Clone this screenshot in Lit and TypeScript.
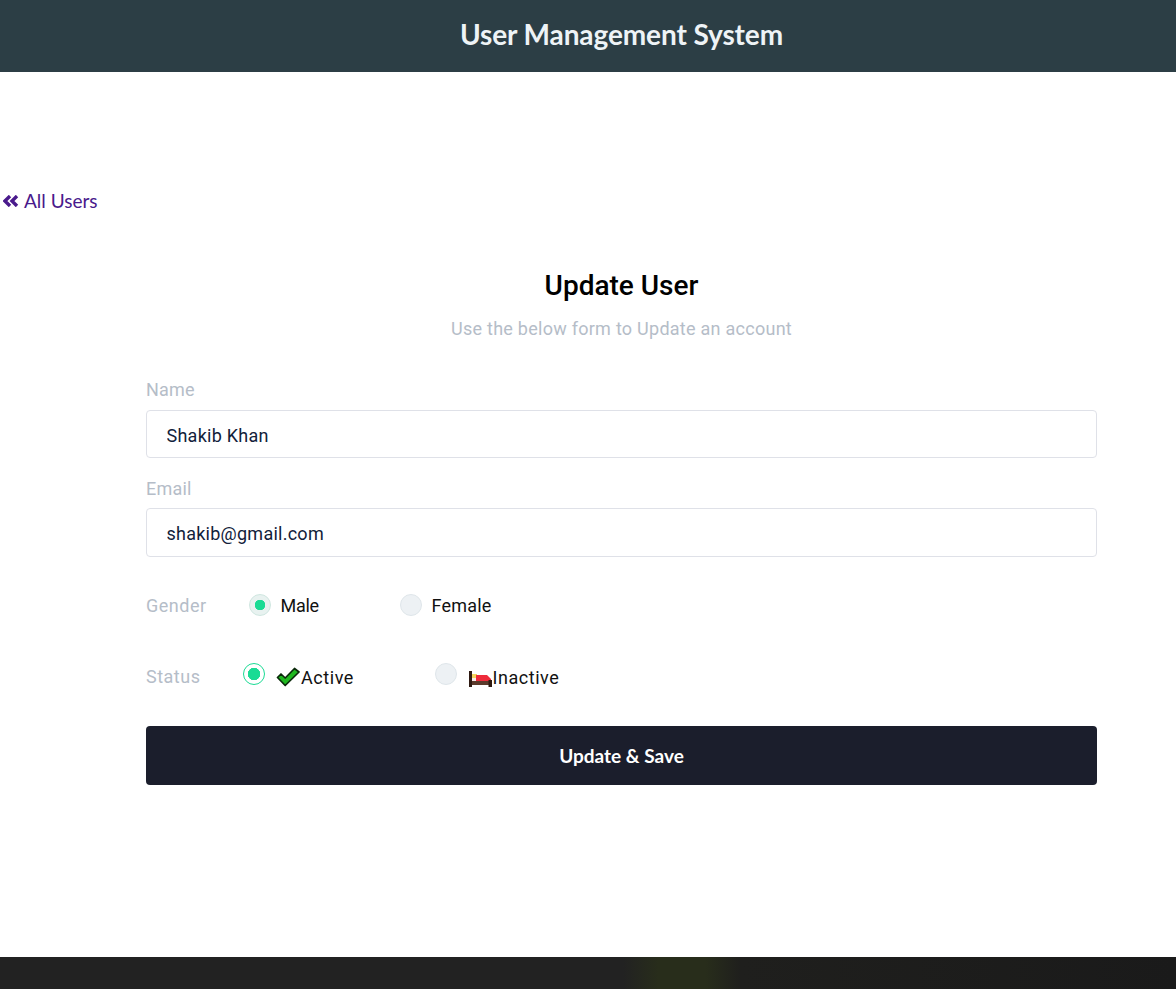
import { LitElement, html, css } from "lit";
import { customElement } from "lit/decorators.js";

@customElement("app-root")
export class AppRoot extends LitElement {
  static styles = css`
    :host { display: flex; flex-direction: column; min-height: 989px; background: #fff; font-family: Roboto, "Liberation Sans", sans-serif; font-size: 18px; color: #111; }
    * { box-sizing: border-box; }
    header { height: 72px; background: #2c3e45; display: flex; align-items: center; justify-content: center; padding: 0 0 4px 67px; }
    header h1 { margin: 0; font: 700 28px/1 Lato, "Open Sans", sans-serif; color: #eef3f6; letter-spacing: -0.1px; }
    main { flex: 1; display: flex; flex-direction: column; }
    .back { display: flex; align-items: center; gap: 5px; margin: 118px 0 0 3px; height: 22px; color: #4a1a8c; font: 400 19px/22px Lato, sans-serif; letter-spacing: 0; text-decoration: none; width: fit-content; }
    .back svg { width: 16px; height: 12px; }
    .wrap { margin: 0 79px 0 146px; display: flex; flex-direction: column; }
    h2 { margin: 55px 0 0; text-align: center; font: 500 28px/38px Roboto, sans-serif; color: #000; letter-spacing: 0; }
    .sub { margin: 13px 0 0; text-align: center; color: #b5bdc8; font-size: 18px; line-height: 22px; letter-spacing: 0.26px; }
    .label { color: #b5bdc8; font-size: 18px; line-height: 22px; letter-spacing: 0.2px; }
    .first { margin-top: 39px; }
    .second { margin-top: 20px; }
    .field { display: block; margin-top: 9px; width: 100%; height: 48px; border: 1px solid #dfe1e8; border-radius: 4px; padding: 2px 20px 0 19.5px; font: 400 18px Roboto, sans-serif; color: #12213a; background: #fff; outline: none; letter-spacing: 0.25px; }
    .tall { height: 49px; margin-top: 8px; }
    .row { display: flex; align-items: center; height: 24px; }
    .gender { margin-top: 36px; }
    .status { margin-top: 47px; }
    .row .label { width: 102.5px; letter-spacing: 0.5px; padding-top: 1px; }
    .status .label { width: 97px; }
    label.opt { display: flex; align-items: center; color: #111; letter-spacing: 0.2px; }
    input[type="radio"] { appearance: none; margin: 0; width: 22px; height: 22px; border-radius: 50%; border: 1px solid #dfe6ea; background: #edf1f4; flex: none; }
    input[type="radio"]:checked { background: radial-gradient(circle, #1adb94 0 5px, #e8f2f0 5.5px); border-color: #cfe6e0; }
    .status input[type="radio"]:checked { background: radial-gradient(circle, #1adb94 0 6px, #fff 6.5px); border-color: #1adb94; }
    .gender .male { width: 151px; letter-spacing: -0.3px; }
    .gender .opt span { margin-left: 10px; margin-top: 1px; }
    .status .active { width: 192px; }
    .status .opt { letter-spacing: 0.55px; }
    .status .opt input { margin-top: -5px; }
    .status .opt svg { width: 24px; height: 20px; margin: 2px 0 0 11px; flex: none; }
    .status .inactive svg { margin-right: 0.5px; }
    .status .active svg { margin-right: 1px; }
    .status .opt span { margin-top: 2px; }
    button { margin-top: 38px; height: 59px; width: 100%; border: 0; border-radius: 4px; background: #1b1e2c; color: #fff; font: 700 19px Lato, sans-serif; letter-spacing: 0; }
    footer { height: 32px; margin-top: auto; background: linear-gradient(90deg, #222 0, #222 53%, #282d1b 56%, #282d1b 60%, #1f1f1d 63%, #1a1a1a 100%); }
  `;

  render() {
    return html`
      <header><h1>User Management System</h1></header>
      <main>
        <a class="back" href="#">
          <svg viewBox="0 0 16 12" aria-hidden="true"><path d="M7 1 2 6l5 5M14 1 9 6l5 5" fill="none" stroke="#4a1a8c" stroke-width="3.4"/></svg>
          All Users
        </a>
        <div class="wrap">
          <h2>Update User</h2>
          <p class="sub">Use the below form to Update an account</p>
          <div class="label first">Name</div>
          <input class="field" .value=${"Shakib Khan"} />
          <div class="label second">Email</div>
          <input class="field tall" .value=${"shakib@gmail.com"} />
          <div class="row gender">
            <div class="label">Gender</div>
            <label class="opt male"><input type="radio" name="g" checked /><span>Male</span></label>
            <label class="opt"><input type="radio" name="g" /><span>Female</span></label>
          </div>
          <div class="row status">
            <div class="label">Status</div>
            <label class="opt active">
              <input type="radio" name="s" checked />
              <svg viewBox="0 0 24 20" aria-hidden="true"><path d="M1.5 10.5 5 7l4.2 4L18.5 1.5 23 5 9.2 18.5z" fill="#1fb81f" stroke="#0a2a0a" stroke-width="1.7" stroke-linejoin="round"/></svg>
              <span>Active</span>
            </label>
            <label class="opt inactive">
              <input type="radio" name="s" />
              <svg viewBox="0 0 24 20" aria-hidden="true">
                <rect x="1" y="4" width="3" height="16" fill="#2e1a12"/>
                <rect x="4" y="7" width="5" height="4" fill="#f4d35e"/>
                <path d="M8 8h11l4 4v2H8z" fill="#ee2b3b"/>
                <rect x="4" y="11" width="4" height="3" fill="#fbeaea"/>
                <rect x="4" y="14" width="20" height="4" fill="#5b3a2b"/>
                <rect x="20.5" y="13" width="3.5" height="7" fill="#2e1a12"/>
              </svg>
              <span>Inactive</span>
            </label>
          </div>
          <button>Update &amp; Save</button>
        </div>
      </main>
      <footer></footer>
    `;
  }
}
